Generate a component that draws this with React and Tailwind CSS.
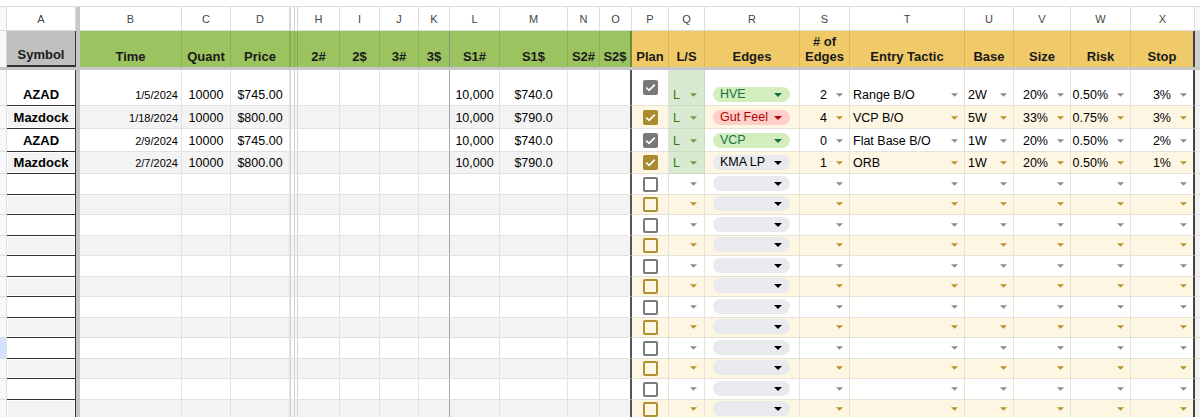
import React from "react";

const COLS =
  "grid grid-cols-[7px_69px_4px_102px_49px_59px_8px_42px_40px_39px_31px_50px_68px_32px_32px_37px_36px_95px_50px_115px_49px_57px_60px_64px_5px]";

const letters = ["H", "I", "J", "K", "L", "M", "N", "O"];
const letters2 = ["P", "Q", "R", "S", "T", "U", "V", "W", "X"];

const trades = [
  { sym: "AZAD", date: "1/5/2024", q: "10000", p: "$745.00", s1n: "10,000", s1p: "$740.0", edge: "HVE", tone: "green", n: "2", tac: "Range B/O", base: "2W", size: "20%", risk: "0.50%", stop: "3%" },
  { sym: "Mazdock", date: "1/18/2024", q: "10000", p: "$800.00", s1n: "10,000", s1p: "$790.0", edge: "Gut Feel", tone: "red", n: "4", tac: "VCP B/O", base: "5W", size: "33%", risk: "0.75%", stop: "3%" },
  { sym: "AZAD", date: "2/9/2024", q: "10000", p: "$745.00", s1n: "10,000", s1p: "$740.0", edge: "VCP", tone: "green", n: "0", tac: "Flat Base B/O", base: "1W", size: "20%", risk: "0.50%", stop: "2%" },
  { sym: "Mazdock", date: "2/7/2024", q: "10000", p: "$800.00", s1n: "10,000", s1p: "$790.0", edge: "KMA LP", tone: "gray", n: "1", tac: "ORB", base: "1W", size: "20%", risk: "0.50%", stop: "1%" },
];

const heights = ["h-[36px]", "h-[23px]", "h-[23px]", "h-[22px]"];

function Tri({ color, w = 8, h = 4 }) {
  return (
    <svg width={w} height={h} viewBox="0 0 8 4" className="shrink-0">
      <polygon points="0,0 8,0 4,4" fill={color} />
    </svg>
  );
}

function Check({ on, gold }) {
  if (on) {
    return (
      <div className={`w-[15px] h-[15px] rounded-[2px] flex items-center justify-center ${gold ? "bg-[#a98a2e]" : "bg-[#787878]"}`}>
        <svg width="11" height="9" viewBox="0 0 11 9">
          <path d="M1.2 4.6 L4.1 7.4 L9.8 1.6" stroke="white" strokeWidth="1.7" fill="none" />
        </svg>
      </div>
    );
  }
  return <div className={`w-[15px] h-[15px] rounded-[2px] border-2 ${gold ? "border-[#b08f35]" : "border-[#7a7a7a]"}`} />;
}

const chipTone = {
  green: { bg: "bg-[#d4edbc]", text: "text-[#11734b]", arrow: "#11734b" },
  red: { bg: "bg-[#ffcfc9]", text: "text-[#b10202]", arrow: "#b10202" },
  gray: { bg: "bg-[#e8eaed]", text: "text-black", arrow: "#000" },
};

function Markers({ bg }) {
  return (
    <div className={`flex justify-between border-b border-[#e2e2e2] ${bg}`}>
      <span className="w-px bg-[#d4d4d4]" />
      <span className="w-px bg-[#d4d4d4]" />
      <span className="w-px bg-[#d4d4d4]" />
    </div>
  );
}

function Drop({ text, right, bg, arrow, last }) {
  return (
    <div className={`flex items-end pb-[2px] border-b border-[#e6e2d6] ${last ? "border-r-2 border-r-[#444]" : "border-r"} ${bg}`}>
      <div className="flex items-center w-full h-[16px]">
        <span className={`flex-1 whitespace-nowrap ${right ? "text-right pr-[9px]" : "pl-[3px]"}`}>{text}</span>
        <span className="mr-[6px] flex">
          <Tri color={arrow} w={7} />
        </span>
      </div>
    </div>
  );
}

function DataRow({ r, i, h }) {
  const band = i % 2 === 1;
  const gray = band ? "bg-[#f3f3f3]" : "bg-white";
  const cream = band ? "bg-[#fdf6e3]" : "bg-white";
  const arrow = band ? "#b8932a" : "#8c8c8c";
  const cell = `flex items-end justify-center pb-[2px] border-r border-b border-[#e2e2e2] ${gray}`;
  const tone = r ? chipTone[r.tone] : chipTone.gray;
  return (
    <div className={`${COLS} ${h}`}>
      <div className={`border-r border-b border-[#dadce0] ${i === 12 ? "bg-[#d3e3fd]" : "bg-[#f8f9fa]"}`} />
      <div className={`flex items-end justify-center pb-[2px] font-bold text-[13px] border-r border-b border-[#333] ${gray} ${band ? "shadow-[inset_0_0_0_1px_#fff]" : ""}`}>
        {r && r.sym}
      </div>
      <div className="bg-[#c7c7c7]" />
      <div className={`${cell} !justify-end pr-[3px] text-[11px]`}>{r && r.date}</div>
      <div className={cell}>{r && r.q}</div>
      <div className={cell}>{r && r.p}</div>
      <Markers bg={gray} />
      <div className={cell} />
      <div className={cell} />
      <div className={cell} />
      <div className={`${cell} border-r-[#a6a6a6]`} />
      <div className={cell}>{r && r.s1n}</div>
      <div className={cell}>{r && r.s1p}</div>
      <div className={cell} />
      <div className={`${cell} border-r-2 border-r-[#555]`} />
      <div className={`flex items-center justify-center border-r border-b border-[#e6e2d6] ${cream}`}>
        <Check on={!!r} gold={band} />
      </div>
      <div className={`flex items-end pb-[2px] border-r border-b ${r ? "bg-[#d9ead3] border-[#c8dcc0]" : `${cream} border-[#e6e2d6]`}`}>
        <div className="flex items-center w-full h-[16px]">
          <span className="flex-1 pl-[4px] text-[#38761d]">{r && "L"}</span>
          <span className="mr-[7px] flex">
            <Tri color={r ? "#6b9b45" : arrow} w={7} />
          </span>
        </div>
      </div>
      <div className={`flex items-end pb-[3px] pl-[8px] pr-[9px] border-r border-b border-[#e6e2d6] ${cream}`}>
        <div className={`h-[15px] w-full rounded-full flex items-center pl-[7px] pr-[8px] ${tone.bg}`}>
          <span className={`flex-1 leading-[15px] whitespace-nowrap ${tone.text}`}>{r && r.edge}</span>
          <Tri color={tone.arrow} />
        </div>
      </div>
      <Drop text={r && r.n} right bg={cream} arrow={arrow} />
      <Drop text={r && r.tac} bg={cream} arrow={arrow} />
      <Drop text={r && r.base} bg={cream} arrow={arrow} />
      <Drop text={r && r.size} right bg={cream} arrow={arrow} />
      <Drop text={r && r.risk} right bg={cream} arrow={arrow} />
      <Drop text={r && r.stop} right bg={cream} arrow={arrow} last />
      <div className="bg-[#f1f1f1] border-b border-[#e2e2e2]" />
    </div>
  );
}

export default function App() {
  const rows = [];
  for (let i = 0; i < 16; i++) {
    const h = i < 4 ? heights[i] : i % 2 === 0 ? "h-[21px]" : "h-[20px]";
    rows.push(<DataRow key={i} r={trades[i]} i={i} h={h} />);
  }

  const lhCell = "flex items-center justify-center text-[11px] text-[#444] bg-white border-r border-b border-[#dadce0]";
  const green = "flex items-end justify-center pb-[3px] bg-[#9bc35f] border-r border-[#8ab24f]";
  const yellow = "flex items-end justify-center pb-[3px] bg-[#f0ca69] border-r border-[#dcb556]";

  return (
    <div className="w-[1200px] h-[417px] overflow-hidden bg-white text-[12.5px] leading-[16px] text-black font-['Liberation_Sans',Arial,sans-serif]">
      {/* top strip */}
      <div className="h-[7px] bg-white border-b border-[#dadce0]" />

      {/* column letters */}
      <div className={`${COLS} h-[24px]`}>
        <div className="bg-[#f8f9fa] border-r border-b border-[#dadce0]" />
        <div className={lhCell}>A</div>
        <div className="bg-[#c7c7c7]" />
        <div className={lhCell}>B</div>
        <div className={lhCell}>C</div>
        <div className={lhCell}>D</div>
        <Markers bg="bg-white" />
        {letters.map((l) => (
          <div key={l} className={lhCell}>{l}</div>
        ))}
        {letters2.map((l) => (
          <div key={l} className={lhCell}>{l}</div>
        ))}
        <div className="bg-[#f8f9fa] border-b border-[#dadce0]" />
      </div>

      {/* header */}
      <div className={`${COLS} h-[36px] font-bold text-[13px] leading-[15px] text-[#1a1a1a]`}>
        <div className="bg-[#f8f9fa] border-r border-[#dadce0]" />
        <div className="flex items-end justify-center pb-[3px] bg-[#bfbfbf] border-r border-b-2 border-[#333]">Symbol</div>
        <div className="bg-[#c7c7c7]" />
        <div className={green}>Time</div>
        <div className={green}>Quant</div>
        <div className={green}>Price</div>
        <div className="flex justify-between bg-[#9bc35f]">
          <span className="w-px bg-[#86ab4f]" />
          <span className="w-px bg-[#86ab4f]" />
          <span className="w-px bg-[#86ab4f]" />
        </div>
        <div className={green}>2#</div>
        <div className={green}>2$</div>
        <div className={green}>3#</div>
        <div className={`${green} border-r-[#8f8f8f]`}>3$</div>
        <div className={green}>S1#</div>
        <div className={green}>S1$</div>
        <div className={green}>S2#</div>
        <div className={`${green} border-r-2 border-r-[#6e8a3f]`}>S2$</div>
        <div className={yellow}>Plan</div>
        <div className={yellow}>L/S</div>
        <div className={yellow}>Edges</div>
        <div className={`${yellow} text-center`}>
          <span>
            # of
            <br />
            Edges
          </span>
        </div>
        <div className={yellow}>Entry Tactic</div>
        <div className={yellow}>Base</div>
        <div className={yellow}>Size</div>
        <div className={yellow}>Risk</div>
        <div className={`${yellow} border-r-2 border-r-[#444]`}>Stop</div>
        <div className="bg-[#cfcfcf]" />
      </div>

      {/* frozen divider */}
      <div className="h-[3px] bg-[#c7c7c7]" />

      {rows}
    </div>
  );
}
